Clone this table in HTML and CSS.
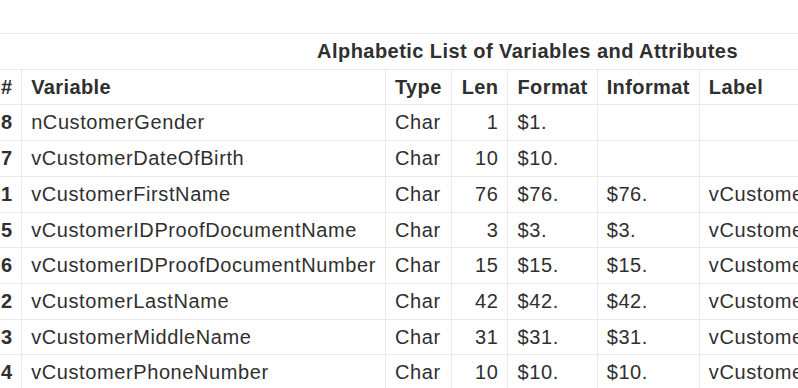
FILE: index.html
```html
<!DOCTYPE html>
<html lang="en">
<head>
    <meta charset="UTF-8">
    <meta name="viewport" content="width=device-width, initial-scale=1.0">
    <title>Alphabetic List of Variables and Attributes</title>
    <link rel="stylesheet" href="styles.css">
</head>
<body>

<!-- PROC CONTENTS 출력 테이블 -->
<div class="output-wrap">
    <table class="vars-table">
        <thead>
            <tr>
                <th class="table-title" colspan="7">Alphabetic List of Variables and Attributes</th>
            </tr>
            <tr>
                <th class="col-num">#</th>
                <th>Variable</th>
                <th>Type</th>
                <th class="num len">Len</th>
                <th>Format</th>
                <th>Informat</th>
                <th>Label</th>
            </tr>
        </thead>
        <tbody>
            <tr>
                <th class="col-num">8</th>
                <td>nCustomerGender</td>
                <td>Char</td>
                <td class="num">1</td>
                <td>$1.</td>
                <td></td>
                <td></td>
            </tr>
            <tr>
                <th class="col-num">7</th>
                <td>vCustomerDateOfBirth</td>
                <td>Char</td>
                <td class="num">10</td>
                <td>$10.</td>
                <td></td>
                <td></td>
            </tr>
            <tr>
                <th class="col-num">1</th>
                <td>vCustomerFirstName</td>
                <td>Char</td>
                <td class="num">76</td>
                <td>$76.</td>
                <td>$76.</td>
                <td>vCustomerFirstName</td>
            </tr>
            <tr>
                <th class="col-num">5</th>
                <td>vCustomerIDProofDocumentName</td>
                <td>Char</td>
                <td class="num">3</td>
                <td>$3.</td>
                <td>$3.</td>
                <td>vCustomerIDProofDocumentName</td>
            </tr>
            <tr>
                <th class="col-num">6</th>
                <td>vCustomerIDProofDocumentNumber</td>
                <td>Char</td>
                <td class="num">15</td>
                <td>$15.</td>
                <td>$15.</td>
                <td>vCustomerIDProofDocumentNumber</td>
            </tr>
            <tr>
                <th class="col-num">2</th>
                <td>vCustomerLastName</td>
                <td>Char</td>
                <td class="num">42</td>
                <td>$42.</td>
                <td>$42.</td>
                <td>vCustomerLastName</td>
            </tr>
            <tr>
                <th class="col-num">3</th>
                <td>vCustomerMiddleName</td>
                <td>Char</td>
                <td class="num">31</td>
                <td>$31.</td>
                <td>$31.</td>
                <td>vCustomerMiddleName</td>
            </tr>
            <tr>
                <th class="col-num">4</th>
                <td>vCustomerPhoneNumber</td>
                <td>Char</td>
                <td class="num">10</td>
                <td>$10.</td>
                <td>$10.</td>
                <td>vCustomerPhoneNumber</td>
            </tr>
        </tbody>
    </table>
</div>

</body>
</html>
```

FILE: styles.css
```css
body {
    font-family: "Liberation Sans", Arial, sans-serif;
    margin: 0;
    background-color: #ffffff;
    color: #2f2f2f;
}

/* 가로로 스크롤된 결과 영역 */
.output-wrap {
    overflow: hidden;
    padding-top: 33px;
}

.vars-table {
    border-collapse: collapse;
    margin-left: -8px;
    font-size: 20px;
    letter-spacing: 0.4px;
    white-space: nowrap;
}

.vars-table th,
.vars-table td {
    border: 1px solid #e9e9e9;
    padding: 5px 9px;
    line-height: 24.7px;
    text-align: left;
    vertical-align: top;
}

.vars-table td {
    letter-spacing: 0.6px;
}

.vars-table th {
    font-weight: bold;
}

/* 표 제목 줄 */
.vars-table .table-title {
    text-align: center;
    letter-spacing: 0.45px;
    border-left: none;
    border-right: none;
}

.vars-table .col-num {
    border-left: none;
    letter-spacing: 0;
}

.vars-table .num {
    text-align: right;
}

.vars-table .len {
    padding-left: 10px;
}
```
